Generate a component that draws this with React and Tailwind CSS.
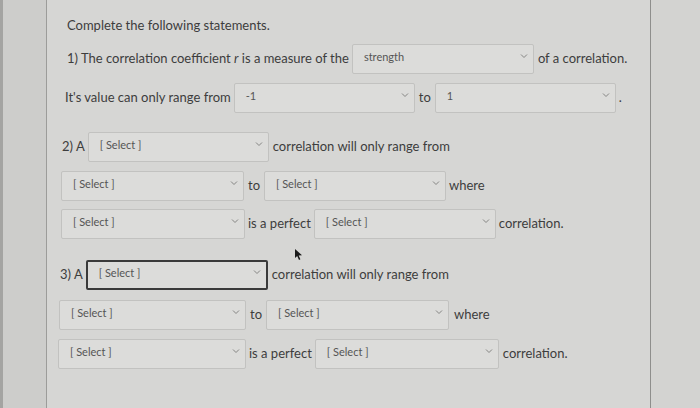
import React from "react";

const Chevron = () => (
  <svg width="8" height="6" viewBox="0 0 8 6" className="mb-[6px]">
    <path d="M1 1.5 L4 4.5 L7 1.5" fill="none" stroke="#858583" strokeWidth="1" />
  </svg>
);

const Select = ({ value = "[ Select ]", w = "w-[182px]", focused = false }) => (
  <div
    className={`${w} h-[30px] shrink-0 flex items-center justify-between pl-[11px] pr-[5px] rounded-[2px] bg-[#dcdcda] ${
      focused ? "border-2 border-[#3a3a3a]" : "border border-[#c2c2c0]"
    }`}
  >
    <span className="text-[11px] text-[#555] mb-[3px]">{value}</span>
    <Chevron />
  </div>
);

const T = ({ children, className = "" }) => (
  <span className={`text-[13px] text-[#3d3d3d] whitespace-nowrap ${className}`}>{children}</span>
);

export default function App() {
  return (
    <div
      className="relative flex w-[700px] h-[408px] overflow-hidden bg-[#d6d6d4]"
      style={{ fontFamily: "Lato, 'Open Sans', sans-serif" }}
    >
      {/* left margin strip */}
      <div className="w-[47px] shrink-0 bg-[#cdcdcb] border-r border-[#9c9c9a]">
        <div className="w-[3px] h-full bg-[#a4a4a2]" />
      </div>

      {/* question panel */}
      <div className="flex-1 flex flex-col pt-[17px]">
        <div className="pl-[20px] h-[18px] flex items-center">
          <T>Complete the following statements.</T>
        </div>

        <div className="mt-[9px] pl-[20px] flex items-center gap-[3px]">
          <T>1) The correlation coefficient <i>r</i> is a measure of the</T>
          <Select value="strength" w="w-[182px]" />
          <T className="ml-[1px]">of a correlation.</T>
        </div>

        <div className="mt-[9px] pl-[18px] flex items-center gap-[3px]">
          <T>It's value can only range from</T>
          <Select value="-1" w="w-[181px]" />
          <T className="mx-[1px]">to</T>
          <Select value="1" w="w-[181px]" />
          <T>.</T>
        </div>

        <div className="mt-[19px] pl-[15px] flex items-center gap-[3px]">
          <T>2) A</T>
          <Select w="w-[181px]" />
          <T className="ml-[1px]">correlation will only range from</T>
        </div>

        <div className="mt-[9px] pl-[14px] flex items-center gap-[3px]">
          <Select w="w-[183px]" />
          <T className="mx-[1px]">to</T>
          <Select w="w-[182px]" />
          <T>where</T>
        </div>

        <div className="mt-[8px] pl-[14px] flex items-center gap-[3px]">
          <Select w="w-[184px]" />
          <T>is a perfect</T>
          <Select w="w-[182px]" />
          <T>correlation.</T>
        </div>

        <div className="mt-[21px] pl-[13px] flex items-center gap-[3px]">
          <T>3) A</T>
          <Select w="w-[182px]" focused />
          <T className="ml-[1px]">correlation will only range from</T>
        </div>

        <div className="mt-[10px] pl-[12px] flex items-center gap-[3px]">
          <Select w="w-[187px]" />
          <T className="mx-[1px]">to</T>
          <Select w="w-[183px]" />
          <T className="ml-[2px]">where</T>
        </div>

        <div className="mt-[9px] pl-[11px] flex items-center gap-[3px]">
          <Select w="w-[188px]" />
          <T>is a perfect</T>
          <Select w="w-[184px]" />
          <T className="ml-[1px]">correlation.</T>
        </div>
      </div>

      {/* right margin strip */}
      <div className="w-[50px] shrink-0 bg-[#d3d3d1] border-l border-[#8e8e8c]" />

      {/* mouse pointer */}
      <svg className="absolute left-[294px] top-[248px]" width="9" height="13" viewBox="0 0 9 13">
        <path d="M1 1 L1 10 L3.2 8 L5 12 L6.4 11.3 L4.7 7.5 L8 7.3 Z" fill="#1a1a1a" />
      </svg>
    </div>
  );
}
